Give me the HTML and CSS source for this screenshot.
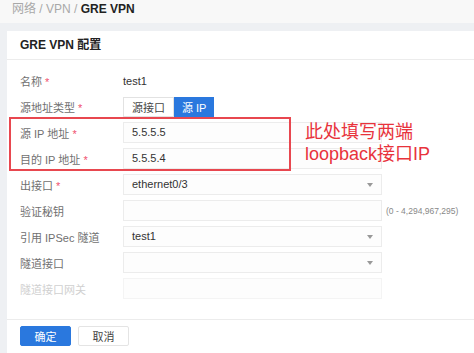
FILE: index.html
```html
<!DOCTYPE html>
<html lang="zh-CN">
<head>
    <meta charset="UTF-8">
    <title>GRE VPN 配置</title>
    <link rel="stylesheet" href="styles.css">
</head>
<body>
    <div class="crumb">
        <span class="crumb-path">网络 / VPN / </span><span class="crumb-current">GRE VPN</span>
    </div>

    <div class="main">
        <div class="card">
            <div class="card-head">GRE VPN 配置</div>

            <div class="form">
                <div class="row">
                    <label class="label">名称 <i>*</i></label>
                    <span class="plain">test1</span>
                </div>
                <div class="row">
                    <label class="label">源地址类型 <i>*</i></label>
                    <div class="seg">
                        <button class="seg-btn">源接口</button>
                        <button class="seg-btn on">源 IP</button>
                    </div>
                </div>
                <div class="row">
                    <label class="label">源 IP 地址 <i>*</i></label>
                    <div class="input">5.5.5.5</div>
                </div>
                <div class="row">
                    <label class="label">目的 IP 地址 <i>*</i></label>
                    <div class="input">5.5.5.4</div>
                </div>
                <div class="row">
                    <label class="label">出接口 <i>*</i></label>
                    <div class="input select">ethernet0/3</div>
                </div>
                <div class="row">
                    <label class="label">验证秘钥</label>
                    <div class="input"></div>
                    <span class="hint">(0 - 4,294,967,295)</span>
                </div>
                <div class="row">
                    <label class="label">引用 IPSec 隧道</label>
                    <div class="input select">test1</div>
                </div>
                <div class="row">
                    <label class="label">隧道接口</label>
                    <div class="input select"></div>
                </div>
                <div class="row disabled">
                    <label class="label">隧道接口网关</label>
                    <div class="input"></div>
                </div>
            </div>

            <div class="card-foot">
                <button class="btn primary">确定</button>
                <button class="btn">取消</button>
            </div>
        </div>
    </div>

    <!-- annotation drawn over the screenshot -->
    <div class="mark"></div>
    <div class="note">此处填写两端<br>loopback接口IP</div>
</body>
</html>
```

FILE: styles.css
```css
* {
    margin: 0;
    padding: 0;
    box-sizing: border-box;
}

body {
    font-family: 'Liberation Sans', Arial, 'Noto Sans CJK SC', sans-serif;
    font-size: 11px;
    color: #333;
    background: #eef0f3;
    width: 474px;
    height: 353px;
    overflow: hidden;
    position: relative;
}

.crumb {
    height: 23px;
    background: #f8f8f8;
    padding-left: 12px;
    line-height: 19px;
    font-size: 12px;
}

.crumb-path {
    color: #a8a8a8;
}

.crumb-current {
    color: #222;
    font-weight: bold;
}

.main {
    padding: 8px 0 0 7px;
}

.card {
    background: #fff;
    height: 330px;
}

.card-head {
    height: 29px;
    padding-left: 13px;
    line-height: 29px;
    font-size: 12px;
    font-weight: bold;
    color: #222;
    border-bottom: 1px solid #ececec;
}

.form {
    padding: 10px 0 20px 13px;
    border-bottom: 1px solid #ececec;
}

.row {
    display: flex;
    align-items: center;
    height: 21px;
    margin-bottom: 5px;
}

.row:last-child {
    margin-bottom: 0;
}

.label {
    width: 103px;
    color: #707070;
}

.label i {
    font-style: normal;
    color: #f0506e;
}

.plain {
    color: #333;
}

.seg {
    display: flex;
}

.seg-btn {
    font-family: inherit;
    font-size: 11px;
    height: 20px;
    border: 1px solid #e2e2e2;
    background: #fff;
    color: #444;
    padding: 0 8px;
}

.seg-btn.on {
    background: #2a78de;
    border-color: #2a78de;
    color: #fff;
    padding: 0 7px;
}

.input {
    width: 259px;
    height: 21px;
    border: 1px solid #ececec;
    background: #fdfdfd;
    padding-left: 8px;
    line-height: 19px;
    color: #333;
    position: relative;
}

.select::after {
    content: "";
    position: absolute;
    right: 8px;
    top: 8px;
    border-left: 3px solid transparent;
    border-right: 3px solid transparent;
    border-top: 4px solid #999;
}

.hint {
    margin-left: 4px;
    font-size: 8.5px;
    color: #888;
}

.disabled .label {
    color: #d0d0d0;
}

.disabled .input {
    border-color: #f4f4f4;
}

.card-foot {
    display: flex;
    gap: 7px;
    padding: 6px 0 0 13px;
}

.btn {
    font-family: inherit;
    font-size: 11px;
    width: 51px;
    height: 20px;
    border: 1px solid #e4e4e4;
    border-radius: 2px;
    background: #fff;
    color: #444;
}

.btn.primary {
    background: #2a78de;
    border-color: #2a78de;
    color: #fff;
}

.mark {
    position: absolute;
    left: 9px;
    top: 117px;
    width: 282px;
    height: 54px;
    border: 2px solid #e8474f;
}

.note {
    position: absolute;
    left: 305px;
    top: 121px;
    font-size: 18px;
    line-height: 22px;
    color: #e8333c;
}
```
